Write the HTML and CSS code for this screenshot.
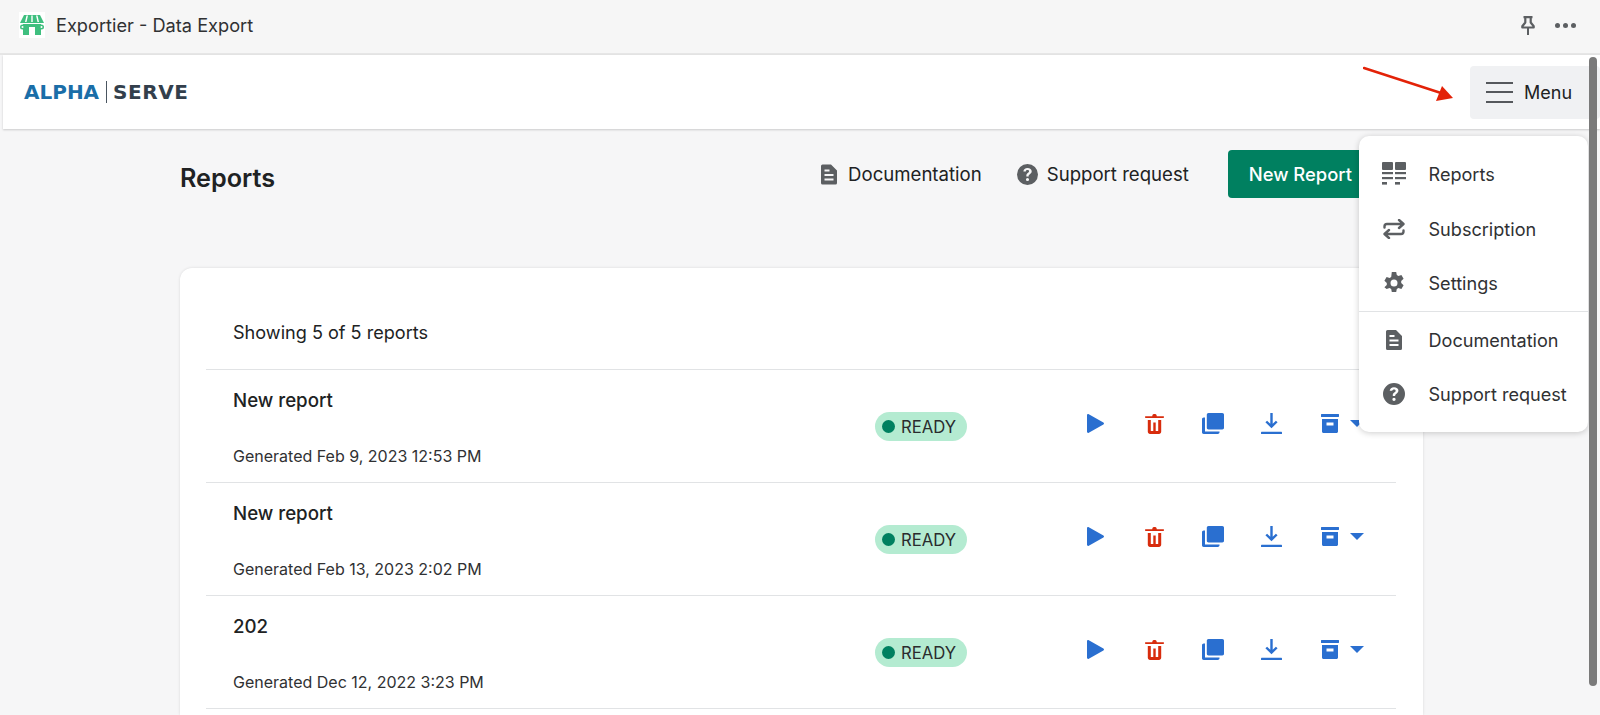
FILE: index.html
```html
<!DOCTYPE html>
<html lang="en">
<head>
<meta charset="utf-8">
<title>Exportier - Data Export</title>
<link rel="stylesheet" href="styles.css">
</head>
<body>
<svg class="sprites" width="0" height="0" aria-hidden="true">
  <symbol id="i-doc" viewBox="0 0 16 20"><path fill-rule="evenodd" d="M1.5 0H10l6 6v12.5a1.5 1.5 0 0 1-1.5 1.5h-13A1.5 1.5 0 0 1 0 18.500v-17A1.500 1.500 0 0 1 1.500 0zM3.500 9.500v2h9v-2zM3.500 14v2h9v-2zM3.500 5v2h5V5z"/></symbol>
  <symbol id="i-help" viewBox="0 0 20 20"><path fill-rule="evenodd" d="M10 0a10 10 0 1 1 0 20 10 10 0 0 1 0-20zM10 3.800c-2.200 0-3.800 1.300-3.900 3.300h2.300c.1-.8.700-1.300 1.600-1.300s1.500.5 1.500 1.200c0 .6-.3 1-1.200 1.600-1 .7-1.500 1.400-1.400 2.700v.5h2.200v-.4c0-.7.300-1.100 1.200-1.700 1-.7 1.700-1.500 1.700-2.800 0-1.800-1.600-3.100-4-3.100zM10 13.300a1.500 1.500 0 1 0 0 3 1.500 1.500 0 0 0 0-3z"/></symbol>
  <symbol id="i-play" viewBox="0 0 17 19"><path d="M0 1.200C0 .2 1-.3 1.800.2l14.600 8.200c.8.500.8 1.600 0 2L1.800 18.800C1 19.300 0 18.800 0 17.800z"/></symbol>
  <symbol id="i-trash" viewBox="0 0 19 20"><path d="M7.200 2.200a2.300 2.300 0 0 1 4.600 0h6.400a.8.800 0 0 1 0 1.800H.8a.8.800 0 0 1 0-1.800z"/><path d="M2.800 6h3v11h2.500V8.500h2.400V17h2.500V6h3v11.800c0 1.200-1 2.200-2.200 2.200H5c-1.200 0-2.200-1-2.200-2.200z"/></symbol>
  <symbol id="i-copy" viewBox="0 0 22 21"><path d="M6.500 0H20.300c.9 0 1.700.8 1.700 1.700v13.100c0 1-.8 1.700-1.700 1.700H6.500c-1 0-1.700-.8-1.700-1.700V1.700C4.800.8 5.500 0 6.500 0z"/><path d="M0 6.300c0-1 .7-1.800 1.700-1.800h1.300v14h14.500v.8c0 1-.8 1.700-1.700 1.700H1.700C.7 21 0 20.300 0 19.300z"/></symbol>
  <symbol id="i-down" viewBox="0 0 21 21"><path d="M9.300 0h2.400v10.800l3.200-3.100 1.700 1.600-6.100 6-6.100-6 1.700-1.600 3.200 3.100z"/><rect y="18.800" width="21" height="2.200" rx=".6"/></symbol>
  <symbol id="i-archive" viewBox="0 0 18 19"><path fill-rule="evenodd" d="M.5 0h17c.3 0 .5.200.5.500v2c0 .3-.2.500-.5.500H.5a.5.500 0 0 1-.5-.5v-2C0 .2.200 0 .5 0zM1 5h16v12.500c0 .8-.7 1.500-1.500 1.500h-13C1.700 19 1 18.300 1 17.500zM5.500 8.500v3h7v-3z"/></symbol>
  <symbol id="i-caret" viewBox="0 0 14 7"><path d="M0 0h14L7 7z"/></symbol>
  <symbol id="i-reports" viewBox="0 0 24 24"><rect width="11" height="8" rx="1"/><rect x="13" width="11" height="8" rx="1"/><rect y="10" width="11" height="2.200"/><rect x="13" y="10" width="11" height="2.200"/><rect y="15" width="11" height="2.200"/><rect x="13" y="15" width="11" height="2.200"/><rect y="20" width="5" height="2.600"/><rect x="13" y="20" width="5" height="2.600"/></symbol>
  <symbol id="i-sub" viewBox="0 0 22 20"><path fill="none" stroke="currentColor" stroke-width="2.400" stroke-linecap="round" stroke-linejoin="round" d="M1.500 8.500V7.500C1.500 6 2.500 5 4 5h16M16 1l4.500 4L16 9M20.500 11.500v1c0 1.500-1 2.500-2.500 2.500H2M6 11l-4.500 4L6 19"/></symbol>
  <symbol id="i-gear" viewBox="0 0 22 22"><path fill-rule="evenodd" d="M8.800 0h4.400l.6 3.100 1.600.9 3-1 2.200 3.800-2.400 2.100v2.200l2.400 2.100-2.200 3.800-3-1-1.600.9-.6 3.100H8.800l-.6-3.100-1.600-.9-3 1L1.400 15.200l2.400-2.100v-2.200L1.400 8.800 3.600 5l3 1 1.600-.9zM11 7.500a3.500 3.500 0 1 0 0 7 3.500 3.500 0 0 0 0-7z"/></symbol>
</svg>

<div class="appbar">
  <svg class="app-icon" viewBox="0 0 26 26" aria-hidden="true">
    <rect width="26" height="26" fill="#fff"/>
    <path fill="#3fbf7f" d="M5 3h16l4 8H1z"/>
    <path fill="#fff" d="M7.500 3.500h1.500L7.500 10H6zM12.300 3.500h1.400V10h-1.400zM17 3.500h1.500L20 10h-1.500z"/>
    <path fill="#3fbf7f" d="M4 12h18v11H4z"/>
    <rect x="10" y="15" width="6" height="8" fill="#fff"/>
    <circle cx="3.500" cy="15" r="2.500" fill="#3fbf7f"/><circle cx="22.500" cy="15" r="2.500" fill="#3fbf7f"/>
    <circle cx="3.500" cy="15" r="1" fill="#fff"/><circle cx="22.500" cy="15" r="1" fill="#fff"/>
  </svg>
  <span class="app-name">Exportier - Data Export</span>
  <svg class="pin" viewBox="0 0 14 19" aria-hidden="true"><path fill="none" stroke="currentColor" stroke-width="2.200" stroke-linejoin="round" d="M2.500 1.200h9M4.300 1.200v5.300L1.300 10.300v1.200h11.400v-1.200L9.700 6.500V1.200"/><path fill="currentColor" d="M6 11.500h2V19H6z"/></svg>
  <span class="dots"><i></i><i></i><i></i></span>
</div>

<header class="topbar">
  <div class="logo"><span class="logo-a">ALPHA</span><span class="logo-bar"></span><span class="logo-s">SERVE</span></div>
  <button class="menu-btn">
    <span class="burger"><i></i><i></i><i></i></span>
    <span>Menu</span>
  </button>
</header>

<main class="page">
  <div class="page-head">
    <h1>Reports</h1>
    <div class="head-actions">
      <a class="head-link"><svg class="ic-doc"><use href="#i-doc"/></svg>Documentation</a>
      <a class="head-link link-support"><svg class="ic-help"><use href="#i-help"/></svg>Support request</a>
      <button class="primary">New Report</button>
    </div>
  </div>

  <section class="card">
    <div class="count">Showing 5 of 5 reports</div>
    <div class="row">
      <div class="info"><div class="name">New report</div><div class="gen">Generated Feb 9, 2023 12:53 PM</div></div>
      <span class="badge"><i></i>READY</span>
      <div class="actions">
        <svg class="a-play"><use href="#i-play"/></svg><svg class="a-trash"><use href="#i-trash"/></svg><svg class="a-copy"><use href="#i-copy"/></svg><svg class="a-down"><use href="#i-down"/></svg><svg class="a-arch"><use href="#i-archive"/></svg><svg class="a-caret"><use href="#i-caret"/></svg>
      </div>
    </div>
    <div class="row">
      <div class="info"><div class="name">New report</div><div class="gen">Generated Feb 13, 2023 2:02 PM</div></div>
      <span class="badge"><i></i>READY</span>
      <div class="actions">
        <svg class="a-play"><use href="#i-play"/></svg><svg class="a-trash"><use href="#i-trash"/></svg><svg class="a-copy"><use href="#i-copy"/></svg><svg class="a-down"><use href="#i-down"/></svg><svg class="a-arch"><use href="#i-archive"/></svg><svg class="a-caret"><use href="#i-caret"/></svg>
      </div>
    </div>
    <div class="row">
      <div class="info"><div class="name">202</div><div class="gen">Generated Dec 12, 2022 3:23 PM</div></div>
      <span class="badge"><i></i>READY</span>
      <div class="actions">
        <svg class="a-play"><use href="#i-play"/></svg><svg class="a-trash"><use href="#i-trash"/></svg><svg class="a-copy"><use href="#i-copy"/></svg><svg class="a-down"><use href="#i-down"/></svg><svg class="a-arch"><use href="#i-archive"/></svg><svg class="a-caret"><use href="#i-caret"/></svg>
      </div>
    </div>
  </section>
</main>

<nav class="dropdown">
  <div class="group">
    <a class="item"><span class="slot"><svg class="m-reports"><use href="#i-reports"/></svg></span>Reports</a>
    <a class="item"><span class="slot"><svg class="m-sub"><use href="#i-sub"/></svg></span>Subscription</a>
    <a class="item"><span class="slot"><svg class="m-gear"><use href="#i-gear"/></svg></span>Settings</a>
  </div>
  <div class="group group-2">
    <a class="item"><span class="slot"><svg class="m-doc"><use href="#i-doc"/></svg></span>Documentation</a>
    <a class="item"><span class="slot"><svg class="m-help"><use href="#i-help"/></svg></span>Support request</a>
  </div>
</nav>

<svg class="arrow" viewBox="0 0 92 37" aria-hidden="true"><path stroke="#e32208" stroke-width="2.400" stroke-linecap="round" d="M1 3 78 28"/><path fill="#e32208" d="M90 33 73 36 79 21z"/></svg>
<div class="scrollbar"></div>
</body>
</html>
```

FILE: styles.css
```css
* { box-sizing: border-box; }
html, body { height: 100%; }
body {
  margin: 0;
  height: 715px;
  overflow: hidden;
  position: relative;
  background: #f6f6f7;
  color: #202223;
  font-family: Inter, "Liberation Sans", sans-serif;
  font-size: 18px;
}
.sprites { position: absolute; }
svg { display: block; fill: currentColor; }

.appbar {
  height: 55px;
  display: flex;
  align-items: center;
  padding: 0 24px 3px 19px;
  background: #f6f6f6;
  border-bottom: 2px solid #e6e6e6;
}
.app-icon { width: 26px; height: 26px; }
.app-name { margin-left: 11px; font-size: 18.200px; color: #303133; }
.pin { width: 14px; height: 19px; margin-left: auto; color: #5c5f62; }
.dots { display: flex; gap: 3px; margin-left: 20px; }
.dots i { width: 5px; height: 5px; border-radius: 50%; background: #5c5f62; }

.topbar {
  height: 74px;
  margin-left: 3px;
  display: flex;
  align-items: center;
  justify-content: space-between;
  padding-left: 21px;
  background: #fff;
  box-shadow: 0 1px 2px rgba(0,0,0,.18);
  position: relative;
}
.logo { display: flex; align-items: center; font-family: "DejaVu Sans", sans-serif; font-size: 20px; font-weight: 700; line-height: 22px; }
.logo-a { color: #1a6ea8; width: 76px; white-space: nowrap; }
.logo-s { color: #333f4c; width: 76px; letter-spacing: .6px; white-space: nowrap; }
.logo-bar { width: 1px; height: 22px; background: #4a5560; margin: 0 6px 0 6px; }
.menu-btn {
  width: 130px;
  height: 53px;
  display: flex;
  align-items: center;
  padding: 0 0 0 16px;
  border: 0;
  border-radius: 4px;
  background: #f0f1f3;
  color: #202223;
  font: 400 18px Inter, sans-serif;
}
.burger { width: 27px; display: flex; flex-direction: column; gap: 7.500px; margin-right: 11px; }
.burger i { height: 2px; background: #55585c; }

.page { padding: 21px 0 0 180px; }
.page-head { display: flex; align-items: flex-start; height: 118px; width: 1193px; }
h1 { margin: 11px 0 0; font-size: 25.200px; font-weight: 600; line-height: 34px; }
.head-actions { margin-left: auto; display: flex; align-items: flex-start; }
.head-link { display: flex; align-items: center; height: 48px; font-size: 18.600px; font-weight: 400; }
.ic-doc { width: 16px; height: 21px; margin-right: 11px; color: #5c5f62; }
.ic-help { width: 21px; height: 21px; margin-right: 9px; color: #5c5f62; }
.link-support { margin-left: 35px; }
.primary {
  margin-left: 39px;
  height: 48px;
  padding: 0 21px;
  border: 0;
  border-radius: 4px;
  background: #008060;
  color: #fff;
  font: 500 18.400px Inter, sans-serif;
}

.card {
  width: 1243px;
  height: 447px;
  padding: 0 27px 0 26px;
  background: #fff;
  border-radius: 12px 12px 0 0;
  box-shadow: 0 0 3px rgba(0,0,0,.12);
}
.count { height: 102px; padding: 52px 0 0 27px; line-height: 24px; font-size: 18.100px; border-bottom: 1px solid #e1e3e5; }
.row {
  height: 113px;
  display: flex;
  align-items: flex-start;
  border-bottom: 1px solid #e1e3e5;
  padding-left: 27px;
}
.info { width: 642px; }
.name { margin-top: 19px; line-height: 24px; font-size: 18.700px; font-weight: 500; }
.gen { margin-top: 31px; line-height: 24px; font-size: 16px; color: #303133; }
.badge {
  width: 92px;
  height: 29px;
  margin-top: 42px;
  display: flex;
  align-items: center;
  padding-left: 7px;
  border-radius: 15px;
  background: #b4ebd1;
  font-size: 16.700px;
  color: #2a2c2e;
}
.badge i { width: 13px; height: 13px; border-radius: 50%; background: #008060; margin-right: 6px; }
.actions { display: flex; align-items: center; height: 21px; margin: 43px 0 0 120px; color: #2a6fd0; }
.a-play { width: 17px; height: 19px; }
.a-trash { width: 19px; height: 20px; margin-left: 41px; color: #d82c0d; }
.a-copy { width: 22px; height: 21px; margin-left: 38px; }
.a-down { width: 21px; height: 21px; margin-left: 37px; }
.a-arch { width: 18px; height: 19px; margin-left: 39px; }
.a-caret { width: 14px; height: 7px; margin-left: 11px; }

.dropdown {
  position: absolute;
  left: 1359px;
  top: 136px;
  width: 229px;
  height: 296px;
  padding-top: 11px;
  background: #fff;
  border-radius: 10px;
  box-shadow: 0 1px 6px rgba(0,0,0,.2);
}
.group-2 { border-top: 1px solid #e1e3e5; padding-top: 1px; }
.item { display: flex; align-items: center; height: 54.500px; font-size: 18.100px; color: #303133; }
.slot { width: 69.500px; display: flex; justify-content: center; color: #5c5f62; flex: none; }
.m-reports { width: 24px; height: 24px; }
.m-sub { width: 22px; height: 20px; }
.m-gear { width: 22px; height: 22px; }
.m-doc { width: 16px; height: 20px; }
.m-help { width: 22px; height: 22px; }

.arrow { position: absolute; left: 1363px; top: 65px; width: 92px; height: 37px; }
.scrollbar {
  position: absolute;
  left: 1589px;
  top: 57px;
  width: 8px;
  height: 629px;
  border-radius: 4px;
  background: #7a7a7a;
}
```
